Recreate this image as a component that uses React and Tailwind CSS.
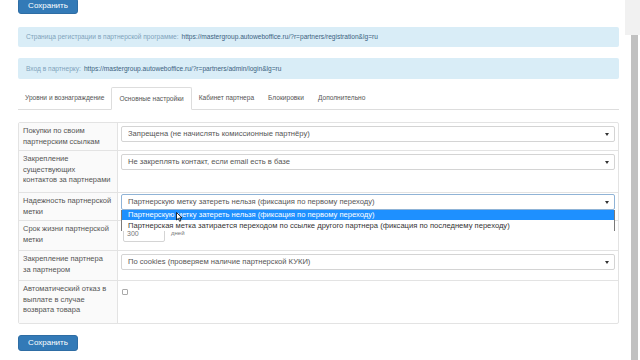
import React from "react";

const font = { fontFamily: '"Liberation Sans", Arial, sans-serif' };

const Arrow = () => (
  <svg width="4" height="3" viewBox="0 0 4 3" className="shrink-0">
    <path d="M0 0 L4 0 L2 3 Z" fill="#333" />
  </svg>
);

const Select = ({ value, focus }) => (
  <div
    className={`h-[16px] border rounded-[2px] bg-white flex items-center justify-between pl-[6px] pr-[5px] text-[7.6px] text-[#555] ${
      focus ? "border-[#8fb3d6]" : "border-[#d4d4d4]"
    }`}
  >
    <span className="whitespace-nowrap">{value}</span>
    <Arrow />
  </div>
);

const Button = ({ className }) => (
  <div
    className={`w-[60px] h-[16px] bg-[#337ab7] border border-[#2e6da4] rounded-[3px] text-white text-[8px] flex items-center justify-center ${className}`}
  >
    Сохранить
  </div>
);

const Cursor = () => (
  <svg width="7" height="10" viewBox="0 0 7 10" className="absolute left-[58px] top-[19px] z-20">
    <path d="M0.5 0.5 L0.5 8 L2.3 6.3 L3.6 9.3 L4.8 8.8 L3.6 5.9 L6 5.9 Z" fill="#fff" stroke="#000" strokeWidth="0.8" />
  </svg>
);

const Label = ({ lines }) => (
  <div className="w-[99px] shrink-0 bg-[#fafafa] border-r border-[#e3e3e3] pl-[4px] pt-[3px] text-[7.5px] leading-[10.5px] text-[#555] whitespace-nowrap overflow-hidden">
    {lines.map((l) => (
      <div key={l}>{l}</div>
    ))}
  </div>
);

const Row = ({ h, lines, children, last }) => (
  <div className={`flex ${last ? "" : "border-b border-[#e3e3e3]"}`} style={{ height: h }}>
    <Label lines={lines} />
    <div className="flex-1 relative pl-[3px] pr-[3px] pt-[3px]">{children}</div>
  </div>
);

const Tab = ({ children, active }) => (
  <div
    className={`px-[7px] h-[23px] flex items-center text-[6.6px] text-[#555] ${
      active ? "bg-white border border-[#ddd] border-b-white rounded-t-[2px] -mb-[1px]" : ""
    }`}
  >
    {children}
  </div>
);

export default function App() {
  return (
    <div className="w-[640px] h-[360px] overflow-hidden flex bg-white" style={font}>
      <div className="flex-1 pl-[18px] pr-[6px]">
        <Button className="-mt-[2px]" />

        <div className="mt-[13px] h-[20px] bg-[#d9edf7] rounded-[2px] flex items-center pl-[8px] text-[6.6px] whitespace-nowrap">
          <span className="text-[#7fa3bb]">Страница регистрации в партнерской программе:</span>
          <span className="text-[#3b6280] ml-[3px]">
            https://mastergroup.autoweboffice.ru/?r=partners/registration&amp;lg=ru
          </span>
        </div>

        <div className="mt-[11px] h-[21px] bg-[#d9edf7] rounded-[2px] flex items-center pl-[8px] text-[6.6px] whitespace-nowrap">
          <span className="text-[#7fa3bb]">Вход в партнерку:</span>
          <span className="text-[#3b6280] ml-[3px]">
            https://mastergroup.autoweboffice.ru/?r=partners/admin/login&amp;lg=ru
          </span>
        </div>

        <div className="mt-[9px] flex items-end border-b border-[#ddd] h-[22px]">
          <Tab>Уровни и вознаграждение</Tab>
          <Tab active>Основные настройки</Tab>
          <Tab>Кабинет партнера</Tab>
          <Tab>Блокировки</Tab>
          <Tab>Дополнительно</Tab>
        </div>

        <div className="mt-[12px] border border-[#e3e3e3] rounded-[2px]">
          <Row h={28} lines={["Покупки по своим", "партнерским ссылкам"]}>
            <Select value="Запрещена (не начислять комиссионные партнёру)" />
          </Row>
          <Row h={42} lines={["Закрепление", "существующих", "контактов за партнерами"]}>
            <Select value="Не закреплять контакт, если email есть в базе" />
          </Row>
          <Row h={28} lines={["Надежность партнерской", "метки"]}>
            <div className="-mt-[2px]">
              <Select focus value="Партнерскую метку затереть нельзя (фиксация по первому переходу)" />
            </div>
            <div className="absolute left-[3px] right-[3px] top-[17px] z-10 bg-white border-x border-[#7a7a7a] text-[7.6px] whitespace-nowrap">
              <div className="h-[10px] bg-[#1e90ff] text-white pl-[6px] flex items-center">
                Партнерскую метку затереть нельзя (фиксация по первому переходу)
              </div>
              <div className="h-[11px] text-[#333] pl-[6px] flex items-center">
                Партнерская метка затирается переходом по ссылке другого партнера (фиксация по последнему переходу)
              </div>
            </div>
            <Cursor />
          </Row>
          <Row h={30} lines={["Срок жизни партнерской", "метки"]}>
            <div className="flex items-end gap-[6px] pl-[2px]">
              <div className="w-[42px] h-[18px] border border-[#d4d4d4] rounded-[2px] text-[7px] text-[#777] pl-[3px] flex items-end pb-[2px]">
                300
              </div>
              <span className="text-[6px] text-[#777] pb-[4px]">дней</span>
            </div>
          </Row>
          <Row h={30} lines={["Закрепление партнера", "за партнером"]}>
            <Select value="По cookies (проверяем наличие партнерской КУКИ)" />
          </Row>
          <Row h={42} last lines={["Автоматический отказ в", "выплате в случае", "возврата товара"]}>
            <div className="pl-[1px] pt-[5px]">
              <div className="w-[6px] h-[6px] border border-[#aaa] rounded-[1px] bg-white" />
            </div>
          </Row>
        </div>

        <Button className="mt-[11px]" />
      </div>

      <div className="w-[15px] flex flex-col">
        <div className="h-[35px] bg-[#f1f1f1]" />
        <div className="flex-1 flex pl-[6px] pr-[2px]">
          <div className="flex-1 bg-[#c1c1c1]" />
        </div>
      </div>
    </div>
  );
}
